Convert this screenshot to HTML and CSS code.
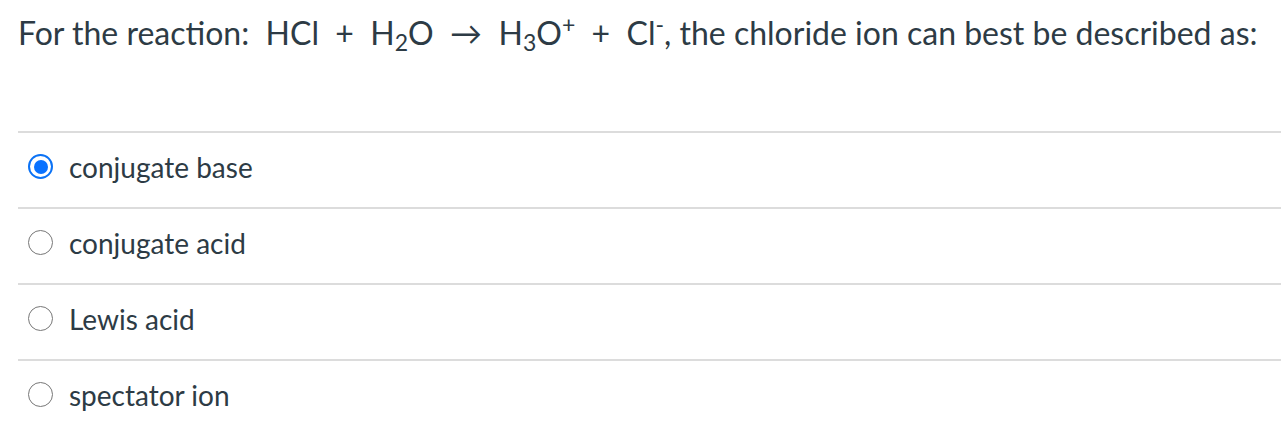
FILE: index.html
```html
<!DOCTYPE html>
<html>
<head>
<meta charset="utf-8">
<link rel="stylesheet" href="styles.css">
</head>
<body>
<div class="quiz">
  <div class="question">For the reaction:&nbsp; HCl&nbsp; +&nbsp; H<sub>2</sub>O&nbsp; →&nbsp; H<sub>3</sub>O<sup>+</sup>&nbsp; +&nbsp; Cl<sup>-</sup>, the chloride ion can best be described as:</div>
  <div class="answers">
    <label class="answer"><span class="radio checked"></span><span class="label">conjugate base</span></label>
    <label class="answer"><span class="radio"></span><span class="label">conjugate acid</span></label>
    <label class="answer"><span class="radio"></span><span class="label">Lewis acid</span></label>
    <label class="answer"><span class="radio"></span><span class="label">spectator ion</span></label>
  </div>
</div>
</body>
</html>
```
FILE: styles.css
```css
html, body {
  margin: 0;
  padding: 0;
  background: #fff;
}
body {
  font-family: Lato, "Noto Sans", sans-serif;
  color: #2d3b45;
}
.quiz {
  padding-left: 18px;
}
.question {
  font-size: 32px;
  line-height: 38px;
  padding-top: 14px;
  height: 131px;
  box-sizing: border-box;
  white-space: nowrap;
}
.question sub, .question sup {
  font-size: 23px;
  line-height: 0;
}
.question sub { vertical-align: -6px; }
.question sup { vertical-align: 12px; }
.answers {
  display: flex;
  flex-direction: column;
}
.answer {
  display: flex;
  align-items: center;
  height: 74px;
  box-sizing: content-box;
  border-top: 2px solid #dcdcdc;
  font-size: 28px;
  padding-left: 10px;
}
.answer .radio, .answer .label {
  margin-top: -7px;
}
.radio {
  width: 25px;
  height: 25px;
  border: 1.5px solid #777;
  border-radius: 50%;
  box-sizing: border-box;
  margin-right: 16px;
  flex: none;
  position: relative;
}
.radio.checked {
  border: 2px solid #0b72f5;
}
.radio.checked::after {
  content: "";
  position: absolute;
  left: 3.5px;
  top: 3.5px;
  width: 14px;
  height: 14px;
  border-radius: 50%;
  background: #0a72ff;
}
```
